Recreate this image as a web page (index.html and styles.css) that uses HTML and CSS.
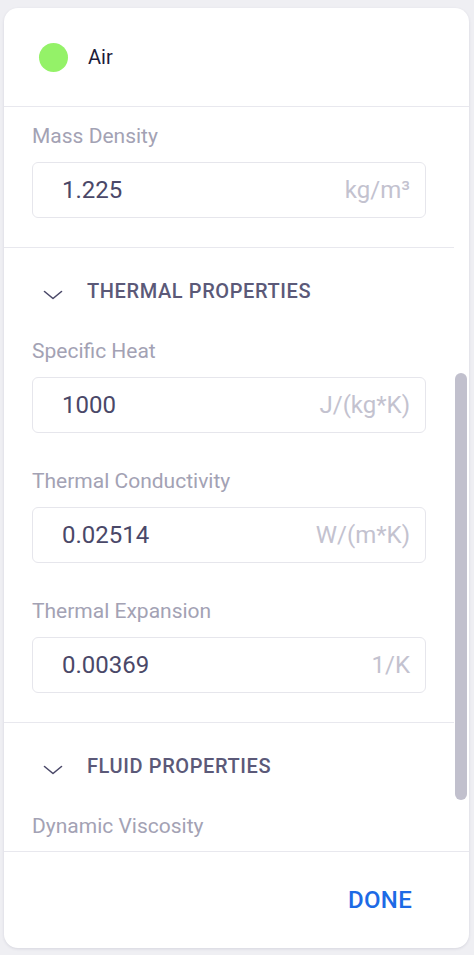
FILE: index.html
```html
<!DOCTYPE html>
<html lang="en">
<head>
  <meta charset="UTF-8" />
  <meta name="viewport" content="width=device-width, initial-scale=1.0" />
  <title>Material - Air</title>
  <link rel="stylesheet" href="styles.css">
</head>
<body>
  <div class="card">
    <div class="card-head">
      <span class="swatch"></span>
      <span class="material-name">Air</span>
    </div>

    <div class="card-body">
      <div class="section">
        <div class="field">
          <div class="field-label">Mass Density</div>
          <div class="field-input">
            <span class="value">1.225</span>
            <span class="unit">kg/m³</span>
          </div>
        </div>
      </div>

      <div class="section">
        <div class="section-title">
          <svg class="chevron" width="20" height="10" viewBox="0 0 20 10"><polyline points="1.5,1.5 10,8.5 18.5,1.5" fill="none" stroke="#4a4868" stroke-width="1.6" stroke-linecap="round" stroke-linejoin="round"/></svg>
          <span>THERMAL PROPERTIES</span>
        </div>
        <div class="field">
          <div class="field-label">Specific Heat</div>
          <div class="field-input">
            <span class="value">1000</span>
            <span class="unit">J/(kg*K)</span>
          </div>
        </div>
        <div class="field">
          <div class="field-label">Thermal Conductivity</div>
          <div class="field-input">
            <span class="value">0.02514</span>
            <span class="unit">W/(m*K)</span>
          </div>
        </div>
        <div class="field">
          <div class="field-label">Thermal Expansion</div>
          <div class="field-input">
            <span class="value">0.00369</span>
            <span class="unit">1/K</span>
          </div>
        </div>
      </div>

      <div class="section">
        <div class="section-title">
          <svg class="chevron" width="20" height="10" viewBox="0 0 20 10"><polyline points="1.5,1.5 10,8.5 18.5,1.5" fill="none" stroke="#4a4868" stroke-width="1.6" stroke-linecap="round" stroke-linejoin="round"/></svg>
          <span>FLUID PROPERTIES</span>
        </div>
        <div class="field">
          <div class="field-label">Dynamic Viscosity</div>
        </div>
      </div>

      <div class="scroll-thumb"></div>
    </div>

    <div class="card-foot">
      <button class="done-btn">DONE</button>
    </div>
  </div>
</body>
</html>
```

FILE: styles.css
```css
body {
  margin: 0;
  background: #efeff3;
  font-family: Roboto, "Liberation Sans", Arial, sans-serif;
}
.card {
  margin: 8px 5px 7px 4px;
  height: 940px;
  background: white;
  border-radius: 14px;
  box-shadow: 0 1px 3px rgba(40, 40, 80, 0.12);
  display: flex;
  flex-direction: column;
  overflow: hidden;
}
.card-head {
  height: 98px;
  flex: none;
  display: flex;
  align-items: center;
  padding-left: 35px;
  border-bottom: 1px solid #e8e8ee;
}
.swatch {
  width: 29px;
  height: 29px;
  border-radius: 50%;
  background: #94f268;
}
.material-name {
  margin-left: 20px;
  font-size: 20px;
  color: #1e1b3a;
}
.card-body {
  flex: 1;
  position: relative;
  overflow: hidden;
  padding: 17px 15px 0 0;
}
.section {
  padding: 0 28px 29px;
  border-bottom: 1px solid #e8e8ee;
}
.section + .section {
  padding-top: 31px;
}
.section-title {
  display: flex;
  align-items: center;
  height: 24px;
  font-size: 20px;
  font-weight: 500;
  letter-spacing: 0.6px;
  color: #5b5978;
  margin-bottom: 36px;
}
.chevron {
  margin: 8px 24px 0 11px;
}
.field + .field {
  margin-top: 36px;
}
.field-label {
  font-size: 21px;
  line-height: 24px;
  color: #a3a2b4;
  margin-bottom: 14px;
}
.field-input {
  height: 56px;
  box-sizing: border-box;
  border: 1px solid #e6e6ec;
  border-radius: 6px;
  display: flex;
  align-items: center;
  justify-content: space-between;
  padding: 0 15px 0 29px;
}
.value {
  font-size: 24px;
  color: #4a4868;
}
.unit {
  font-size: 24px;
  color: #c3c2cf;
}
.scroll-thumb {
  position: absolute;
  top: 266px;
  right: 2px;
  width: 12px;
  height: 427px;
  border-radius: 6px;
  background: #c1c0cd;
}
.card-foot {
  flex: 1 0 96px;
  max-height: 96px;
  border-top: 1px solid #e8e8ee;
  display: flex;
  align-items: center;
  justify-content: flex-end;
  padding-right: 41px;
}
.done-btn {
  border: none;
  background: none;
  padding: 8px 16px;
  font-family: inherit;
  font-size: 24px;
  font-weight: 500;
  letter-spacing: 0.3px;
  color: #1d6ae5;
}
```
